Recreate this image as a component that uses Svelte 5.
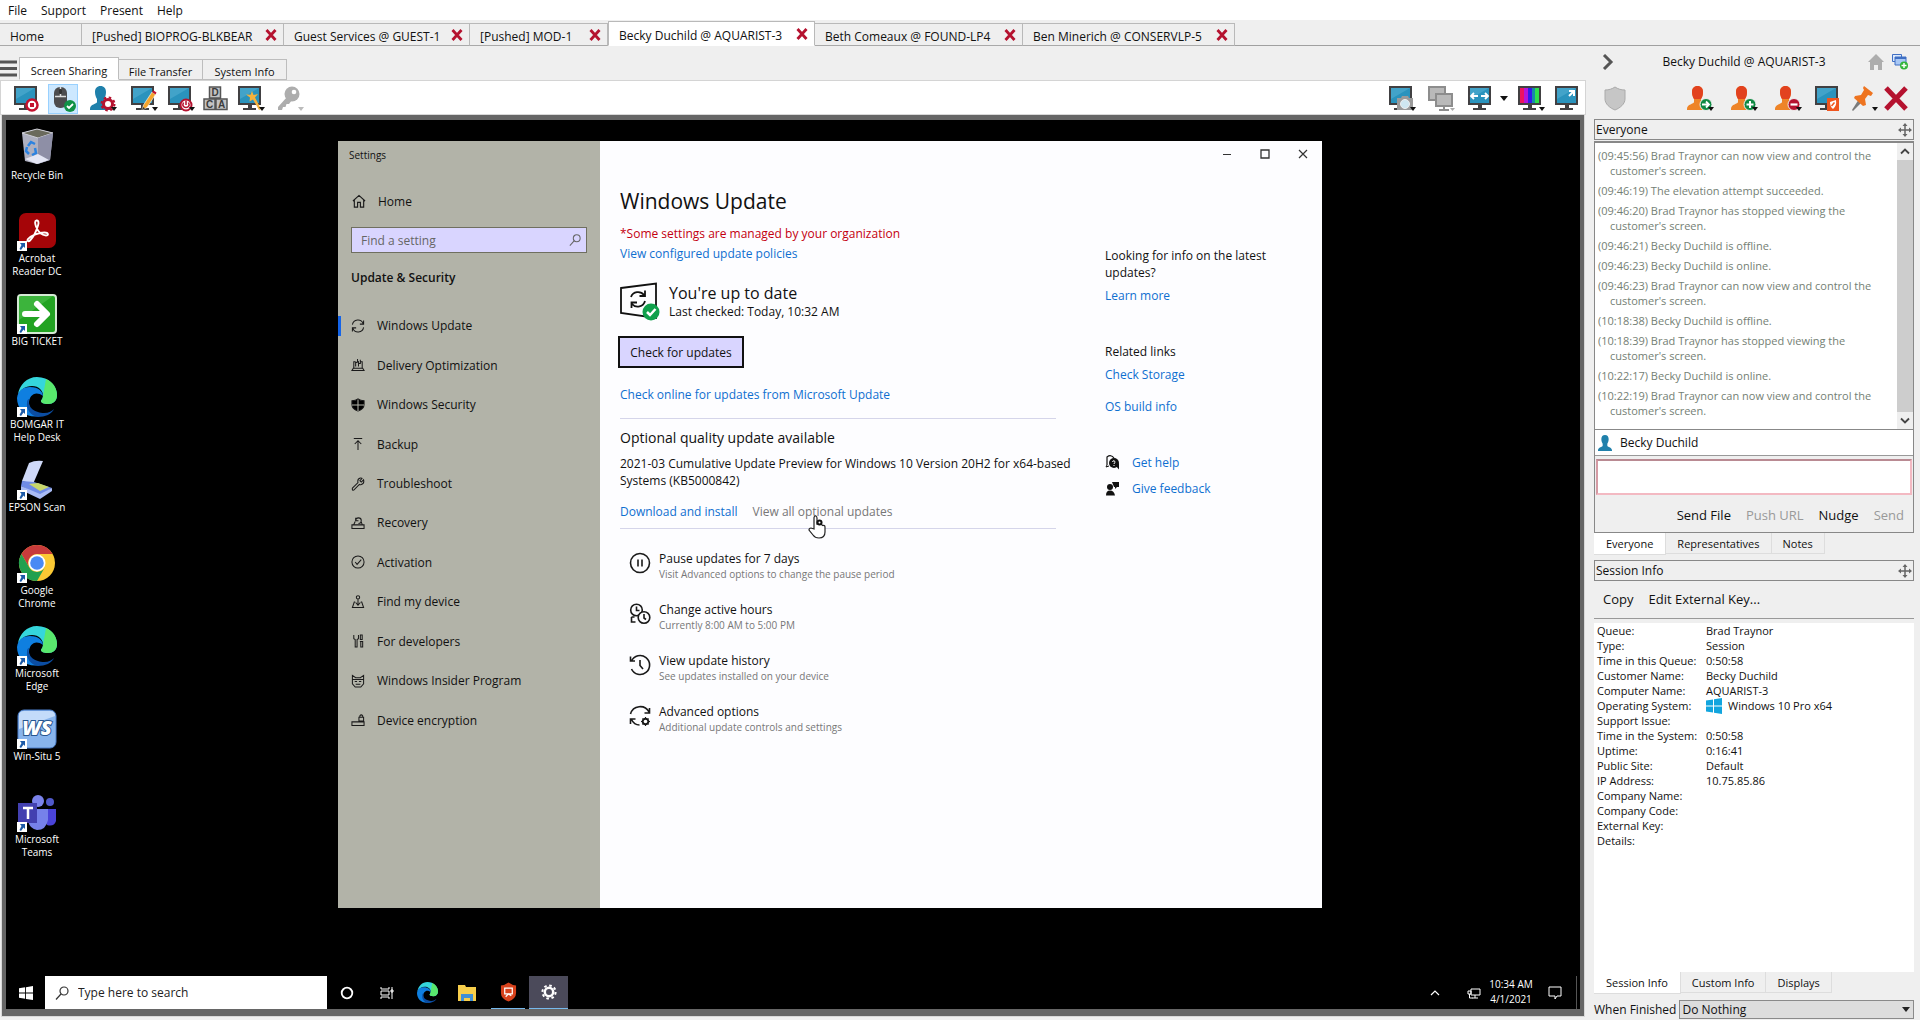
<script>
  const sessions = [
    { name: 'Home', w: 82, closable: false },
    { name: '[Pushed] BIOPROG-BLKBEAR', w: 202, closable: true },
    { name: 'Guest Services @ GUEST-1', w: 186, closable: true },
    { name: '[Pushed] MOD-1', w: 138, closable: true },
    { name: 'Becky Duchild @ AQUARIST-3', w: 207, closable: true, active: true },
    { name: 'Beth Comeaux @ FOUND-LP4', w: 208, closable: true },
    { name: 'Ben Minerich @ CONSERVLP-5', w: 212, closable: true }
  ];
  const shortcuts = [
    { icon: 'bin', label: 'Recycle Bin' },
    { icon: 'acrobat', label: 'Acrobat Reader DC', link: true },
    { icon: 'ticket', label: 'BIG TICKET', link: true },
    { icon: 'edge', label: 'BOMGAR IT Help Desk', link: true },
    { icon: 'scan', label: 'EPSON Scan', link: true },
    { icon: 'chrome', label: 'Google Chrome', link: true },
    { icon: 'edge', label: 'Microsoft Edge', link: true },
    { icon: 'ws', label: 'Win-Situ 5', link: true },
    { icon: 'teams', label: 'Microsoft Teams', link: true }
  ];
  const nav = [
    'Windows Update', 'Delivery Optimization', 'Windows Security', 'Backup', 'Troubleshoot', 'Recovery',
    'Activation', 'Find my device', 'For developers', 'Windows Insider Program', 'Device encryption'
  ];
  const options = [
    ['Pause updates for 7 days', 'Visit Advanced options to change the pause period'],
    ['Change active hours', 'Currently 8:00 AM to 5:00 PM'],
    ['View update history', 'See updates installed on your device'],
    ['Advanced options', 'Additional update controls and settings']
  ];
  const chat = [
    "(09:45:56) Brad Traynor can now view and control the customer's screen.",
    '(09:46:19) The elevation attempt succeeded.',
    "(09:46:20) Brad Traynor has stopped viewing the customer's screen.",
    '(09:46:21) Becky Duchild is offline.',
    '(09:46:23) Becky Duchild is online.',
    "(09:46:23) Brad Traynor can now view and control the customer's screen.",
    '(10:18:38) Becky Duchild is offline.',
    "(10:18:39) Brad Traynor has stopped viewing the customer's screen.",
    '(10:22:17) Becky Duchild is online.',
    "(10:22:19) Brad Traynor can now view and control the customer's screen."
  ];
  const info = [
    ['Queue:', 'Brad Traynor'], ['Type:', 'Session'], ['Time in this Queue:', '0:50:58'],
    ['Customer Name:', 'Becky Duchild'], ['Computer Name:', 'AQUARIST-3'],
    ['Operating System:', 'Windows 10 Pro x64'], ['Support Issue:', ''],
    ['Time in the System:', '0:50:58'], ['Uptime:', '0:16:41'], ['Public Site:', 'Default'],
    ['IP Address:', '10.75.85.86'], ['Company Name:', ''], ['Company Code:', ''],
    ['External Key:', ''], ['Details:', '']
  ];
  let setting = $state('');
  let query = $state('');
  let message = $state('');
</script>

{#snippet cross()}
  <svg viewBox="0 0 12 12" width="12" height="12"><path d="M1.5 1l9 10M10.500 1l-9 10" stroke="#b5122f" stroke-width="2.8" fill="none" /></svg>
{/snippet}

{#snippet screen()}
  <rect x="1" y="1" width="21" height="17" fill="#2a93bd" stroke="#414042" stroke-width="2" />
  <path d="M2 2h19L2 13z" fill="#55b0d4" opacity=".55" />
  <path d="M10 18h4v4h-4zM5 22h13v2H5z" fill="#414042" />
{/snippet}

{#snippet caret()}<path d="M21 21h6l-3 4z" fill="#111" />{/snippet}

{#snippet head()}
  <path d="M5 6c0-3.500 2-6 5.500-6S16 2.500 16 6s-1 5.500-2 7v3c0 2 7 2 7 7v1H0v-1c0-5 7-5 7-7v-3C6 11.500 5 9 5 6z" />
{/snippet}

{#snippet tool(name)}
  <svg viewBox="0 0 28 26" width="28" height="26">
    {#if name === 'stop'}
      {@render screen()}<circle cx="18" cy="19" r="5.500" fill="#fff" stroke="#c4122f" stroke-width="2.500" /><path d="M16 17h4v4h-4z" fill="#c4122f" />
    {:else if name === 'mouse'}
      <rect x="5" y="1" width="13" height="21" rx="6" fill="#4c4c4e" /><path d="M6 10.500h11M11.500 1v9" stroke="#ddd" stroke-width="1.500" /><rect x="10" y="3" width="3" height="5" rx="1" fill="#333" />
      <circle cx="21" cy="20" r="6" fill="#0f9246" /><path d="M18 20l2 2 4-4" stroke="#fff" stroke-width="1.800" fill="none" />
    {:else if name === 'usergear'}
      <g fill="#1f80ab">{@render head()}</g><circle cx="18" cy="18" r="4.500" fill="#fff" stroke="#b5122f" stroke-width="3" /><circle cx="18" cy="18" r="6.500" fill="none" stroke="#b5122f" stroke-width="2" stroke-dasharray="2.500 2.600" />{@render caret()}
    {:else if name === 'pencil'}
      {@render screen()}<path d="M11 24l1.500-5L21 6l3.500 2.500L16 21.500z" fill="#f5a52c" stroke="#fff" stroke-width=".6" /><path d="M21 6l1.500-1.500 3 2-1 2z" fill="#c4122f" /><path d="M11 24l1-3 2 1.500z" fill="#333" />{@render caret()}
    {:else if name === 'power'}
      {@render screen()}<circle cx="18" cy="19" r="5.500" fill="#fff" stroke="#b5122f" stroke-width="2" /><path d="M18 14.500v4.500M15.500 16.500c-1.500 3 0 5 2.500 5s4-2 2.500-5" stroke="#b5122f" stroke-width="1.500" fill="none" />{@render caret()}
    {:else if name === 'blocks'}
      <g fill="#c3c3c3" stroke="#555" stroke-width="1.500"><path d="M6.500 1h11v11h-11zM1 13h11v10.500H1zM13 13h11v10.500H13z" /></g>
      <g font-family="Liberation Sans" font-weight="700" font-size="10" fill="#3c3c3c" text-anchor="middle"><text x="12" y="10">D</text><text x="6.500" y="22">C</text><text x="18.500" y="22">A</text></g>
    {:else if name === 'wand'}
      {@render screen()}<path d="M14 5l1.500 4 4.500-1-3 3.500 6 11.500-2 1-6-10.500-3.500 2 .5-4L8 8.500l4.500.3z" fill="#f7b23b" />{@render caret()}
    {:else if name === 'key'}
      <circle cx="15" cy="8" r="7.500" fill="#adadad" /><circle cx="17" cy="6" r="2.300" fill="#fff" /><path d="M10 11L1 21v3h4l1-3h2.500l1-3H12l3-4z" fill="#adadad" /><path d="M21 21h6l-3 4z" fill="#bbb" />
    {:else if name === 'camera'}
      {@render screen()}<path d="M8 12h4l1-2h6l1 2h4v12H8z" fill="#9a9a9a" /><circle cx="16" cy="18" r="4.500" fill="#cfe7f1" stroke="#eee" />{@render caret()}
    {:else if name === 'multi'}
      <g stroke="#8d8d8d" stroke-width="2" fill="#b9b9b9"><path d="M1 1h16v13H1z" /><path d="M8 8h16v12H8zM16 20v4M11 24h10" /></g><path d="M22 22h5l-2.500 3z" fill="#aaa" />
    {:else if name === 'fit'}
      {@render screen()}<path d="M3 10h7M13 10h7M6 7l-3 3 3 3M17 7l3 3-3 3" stroke="#fff" stroke-width="1.800" fill="none" />
    {:else if name === 'color'}
      {@render screen()}<path d="M2 2h4v15H2z" fill="#ee125e" /><path d="M6 2h4v15H6z" fill="#b614d8" /><path d="M10 2h4v15h-4z" fill="#321be8" /><path d="M14 2h3v15h-3z" fill="#1789a8" /><path d="M17 2h4v15h-4z" fill="#2de04b" />{@render caret()}
    {:else if name === 'full'}
      {@render screen()}<path d="M14 5h5v5M19 5l-5 5" stroke="#fff" stroke-width="2" fill="none" />
    {:else if name === 'shield'}
      <path d="M11 1c3 2 6 3 10 3v9c0 5-5 9-10 11C6 22 1 18 1 13V4c4 0 7-1 10-3z" fill="#c6c6c6" stroke="#aaa" />
    {:else if name === 'share' || name === 'invite' || name === 'remove'}
      <g fill="#ee8428">{@render head()}</g><path d="M5 6c0-3.500 2-6 5.500-6S16 2.500 16 6s-1 5.500-2 7H7C6 11.500 5 9 5 6z" fill="#e2421f" />
      <circle cx="19" cy="18.500" r="6" fill={name === 'remove' ? '#b5122f' : '#0f8a43'} stroke="#efefef" />
      {#if name === 'share'}<path d="M15 18.500h7M19 15.500l3 3-3 3" stroke="#fff" stroke-width="1.800" fill="none" />{:else if name === 'invite'}<path d="M15.500 18.500h7M19 15v7" stroke="#fff" stroke-width="2" />{:else}<path d="M15.500 18.500h7" stroke="#fff" stroke-width="2.200" />{/if}
      {@render caret()}
    {:else if name === 'elevate'}
      {@render screen()}<path d="M12 12h12v13H12z" fill="#f0561f" /><path d="M15 16q3-1 6-2 1 6-3 9-3-2-3-7z" fill="#fff" /><path d="M16.500 20l3-3.500" stroke="#f0561f" stroke-width="1.500" />
    {:else if name === 'pin'}
      <path d="M1 24l7-11 3 3-9 9z" fill="#7b7b7b" /><path d="M13 0l9 7-2 3-3-1-3 4 1 6-3 1-9-8 1-2 6-1 3-5-1-2z" fill="#ee7420" />{@render caret()}
    {:else if name === 'end'}
      <path d="M2 2l20 21M22 2L2 23" stroke="#b5122f" stroke-width="5" />
    {/if}
  </svg>
{/snippet}

{#snippet edge()}
  <path d="M1 18C2 8 10 0 20 0c12 0 20 9 20 18 0 6-4 9-9 9-4 0-7-1-7-3 0-1 2-2 2-6 0-4-4-9-11-9C8 9 3 13 1 18z" fill="#35d6dc" />
  <path d="M29 2c7 3 11 9 11 16 0 6-4 9-9 9-4 0-7-1-7-3 0-1 2-2 2-5 1-6 2-11 3-17z" fill="#59e86d" />
  <path d="M0 21C1 13 7 10 13 10c9 0 13 5 13 9-8-6-14 0-14 7 0 6 5 12 11 13C10 42 0 33 0 21z" fill="#0f7fe0" />
  <path d="M12 22c-2 9 7 14 15 14 5 0 8-2 10-4-2 5-9 8-16 8-7-1-12-8-11-14 0-3 1-4 2-4z" fill="#0b4da2" />
{/snippet}

{#snippet desk(name)}
  <svg viewBox="0 0 40 40" width="40" height="40">
    {#if name === 'bin'}
      <path d="M5 5l15-4 16 4-3 27-13 4-12-3z" fill="#aeb0c0" /><path d="M5 5l15-4 16 4-15 5z" fill="#6a6a5c" stroke="#cfcfd8" /><path d="M21 10l15-5-3 27-12 4z" fill="#8e8fa6" /><path d="M8 31l13-5 11 6-12 4z" fill="#e4e6f4" />
      <path d="M11 18l3-4 4 2M18 20l1 5-4 2M12 26l-3-3 1-4" stroke="#2b82e0" stroke-width="2.500" fill="none" />
    {:else if name === 'acrobat'}
      <rect x="2" y="2" width="37" height="35" rx="7" fill="#a50508" /><path d="M19.500 9.500c2-.5 2.500 2 1.500 5-1.500 5-5 12-8 15-1.500 1.500-3.500.5-2-1.500 2.500-3 10-6.500 16.500-6.500 4 0 4.500 3 1.500 3-4-.2-8-4-10-9-1-3-1.500-5.500.5-6z" stroke="#fff" stroke-width="1.900" fill="none" />
    {:else if name === 'ticket'}
      <rect x="1" y="1" width="38" height="38" rx="3" fill="#22a322" stroke="#d5ead5" stroke-width="2" /><path d="M2 2h34L2 26z" fill="#4fc04f" opacity=".6" /><path d="M8 20h20M20 10l10 10-10 10" stroke="#fff" stroke-width="6" stroke-linecap="round" stroke-linejoin="round" fill="none" />
    {:else if name === 'edge'}
      {@render edge()}
    {:else if name === 'scan'}
      <path d="M12 3Q18 0 26 1L16 24 5 21z" fill="#cfd9f8" /><path d="M5 21l12 1 18 6-12 8L4 26z" fill="#6f8be6" /><path d="M12 24l9-1 11 4-9 4z" fill="#c7d66a" /><path d="M4 26l19 8 12-6v3l-12 8L4 30z" fill="#a9bbf5" />
    {:else if name === 'chrome'}
      <circle cx="20" cy="20" r="18" fill="#fbc934" /><path d="M4.400 11A18 18 0 0 1 35.600 11H20a9 9 0 0 0-8 13z" fill="#c83b3b" /><path d="M4.400 11A18 18 0 0 0 20 38l8-14a9 9 0 0 1-16 0z" fill="#22a04f" /><circle cx="20" cy="20" r="8.500" fill="#fff" /><circle cx="20" cy="20" r="6.800" fill="#4a8af4" />
    {:else if name === 'ws'}
      <rect x="1" y="1" width="38" height="38" rx="6" fill="#88b4ec" stroke="#4c7fca" /><path d="M2 5q1-3 5-3h26q5 0 5 5L2 20z" fill="#c3dbfa" /><text x="20" y="26" font-family="Open Sans" font-size="20" font-weight="800" font-style="italic" fill="#fff" stroke="#27568f" stroke-width="2" paint-order="stroke" text-anchor="middle">WS</text>
    {:else if name === 'teams'}
      <circle cx="21" cy="9" r="6" fill="#7b83eb" /><circle cx="33" cy="10" r="4" fill="#5059c9" /><path d="M26 17h13v12q-2 6-9 4z" fill="#4a43d8" /><path d="M12 17h19v11q-2 10-11 10-7-1-9-9z" fill="#7681ea" /><path d="M1 11h19v20H1z" fill="#4340b0" /><path d="M6 16h10M11 16v11" stroke="#fff" stroke-width="2.500" />
    {/if}
  </svg>
{/snippet}

{#snippet arc()}
  <path d="M1.500 6A6 6 0 0 1 13 5M13.500 1.500V5.500h-4M13.500 9A6 6 0 0 1 2 10M1.500 13.500v-4h4" />
{/snippet}

{#snippet side(i)}
  <svg viewBox="0 0 15 15" width="14" height="14" fill="none" stroke="#1a1a1a" stroke-width="1.100">
    {#if i === 0}{@render arc()}
    {:else if i === 1}<path d="M3 11V4h2M10 4h2v7M1 13.500h13L12.500 11h-10zM5 9V5l3-1v5M8 6h2V2M7 1v3" />
    {:else if i === 2}<path d="M7.500 1Q10 3 14 3v4q0 5-6.500 7Q1 12 1 7V3q4 0 6.500-2z" fill="#000" /><path d="M7.500 2v12M1 7.500h13" stroke="#b2b3a8" />
    {:else if i === 3}<path d="M3 1.500h9M7.500 14V4M4 7.500L7.500 4 11 7.500" />
    {:else if i === 4}<path d="M1.500 12l6-6Q6.500 2 10 1q2 0 2 .5L9.500 4 11 5.500 13.500 3Q14.500 7 11 8 10 8.500 9 8l-6 6q-2 .5-1.500-2z" />
    {:else if i === 5}<path d="M1 13.500h13V9.500H1zM3 9l1.500-3M12 9L11 6.500M5 5a3 3 0 1 1 3 3M5 2v3h3" />
    {:else if i === 6}<circle cx="7.500" cy="7.500" r="6.500" /><path d="M4.500 7.500l2 2.500 4.500-5" />
    {:else if i === 7}<circle cx="7.500" cy="2.500" r="1.800" /><path d="M7.500 4.500V11M4.500 7.500h-1L1.500 13.500h12L11.500 7.500h-1M5 8l2.500 3L10 8" />
    {:else if i === 8}<path d="M3 1v4l1.500 1v8h2V6L8 5V1M10 1h2v5h-2zM9.500 8h3v6h-2V8" />
    {:else if i === 9}<path d="M1.500 1.500L5 4h5l3.500-2.500v9L10.500 14h-6L1.500 10.500zM1.500 6h12M4 8h2.500M8.500 8H11M5 11h5" />
    {:else}<path d="M1 9.500h13v4H1zM8.500 4.500h5v4h-5zM9.500 4.500V3q1.500-2 3 0v1.500" />{/if}
  </svg>
{/snippet}

{#snippet opt(i)}
  <svg viewBox="0 0 22 22" width="22" height="22" fill="none" stroke="#1a1a1a" stroke-width="1.600">
    {#if i === 0}<circle cx="11" cy="11" r="9.500" /><path d="M9 7.500v7M13 7.500v7" />
    {:else if i === 1}<circle cx="7.500" cy="7" r="5.800" /><path d="M7.500 3.500V7.500h3" /><circle cx="15" cy="14.500" r="5.800" fill="#fdfdff" /><path d="M15 11v4l2 1.500M2.500 14v5h4M2.500 14h3" />
    {:else if i === 2}<path d="M2.500 7a9.500 9.500 0 1 1 0 8M1.500 2.500V7H6M11 6v5.500l3 3.500" />
    {:else}<path d="M1.500 9A10 10 0 0 1 20 7M20.500 3v5h-5M1.500 19v-5h5M2.500 14.500Q5 20 10.500 20" /><circle cx="16.500" cy="16.500" r="2.800" stroke-width="2" /><path d="M16.500 12v9M12 16.500h9M13.500 13.500l6 6M19.500 13.500l-6 6" stroke-width="1" /><circle cx="16.500" cy="16.500" r="1.800" fill="#fff" stroke="none" />{/if}
  </svg>
{/snippet}

{#snippet winlogo(size, color)}
  <svg viewBox="0 0 16 16" width={size} height={size} fill={color}><path d="M0 2.500L7 1.500v6H0zM8 1.300L16 0v7.500H8zM0 8.500h7v6l-7-1zM8 8.500h8V16l-8-1.200z" /></svg>
{/snippet}

{#snippet loupe(color, size)}
  <svg viewBox="0 0 14 14" width={size} height={size} fill="none" stroke={color} stroke-width="1.200"><circle cx="9" cy="5" r="4" /><path d="M6 8l-5 5.500" /></svg>
{/snippet}

{#snippet move()}
  <svg viewBox="0 0 14 14" width="14" height="14"><path d="M7 1v12M1 7h12" stroke="#666" stroke-width="1.500" /><path d="M7 0l2.500 3h-5zM7 14l2.500-3h-5zM0 7l3-2.500v5zM14 7l-3-2.500v5z" fill="#666" /></svg>
{/snippet}

<div class="app">
  <nav class="menubar"><button>File</button><button>Support</button><button>Present</button><button>Help</button></nav>

  <div class="sessions">
    {#each sessions as s}
      <div class="session" class:active={s.active} style:width="{s.w}px">
        <button>{s.name}</button>
        {#if s.closable}<button class="close" aria-label="Close {s.name}">{@render cross()}</button>{/if}
      </div>
    {/each}
    <div class="rest"></div>
  </div>

  <div class="body">
    <section class="viewer">
      <div class="subtabs">
        <button class="burger" aria-label="Menu"><svg viewBox="0 0 17 17" width="17" height="17"><path d="M0 2h17M0 8.500h17M0 15h17" stroke="#555" stroke-width="3" /></svg></button>
        <button class="subtab on">Screen Sharing</button>
        <button class="subtab">File Transfer</button>
        <button class="subtab">System Info</button>
      </div>
      <div class="toolbar">
        {#each ['stop', 'mouse', 'usergear', 'pencil', 'power', 'blocks', 'wand', 'key'] as t}
          <button class="tool {t}" aria-label={t}>{@render tool(t)}</button>
        {/each}
        <span class="grow"></span>
        {#each ['camera', 'multi', 'fit', 'color', 'full'] as t}
          <button class="tool {t}" aria-label={t}>{@render tool(t)}{#if t === 'fit'}<svg viewBox="0 0 8 5" width="8" height="5"><path d="M0 0h8L4 5z" fill="#111" /></svg>{/if}</button>
        {/each}
      </div>

      <div class="frame">
        <div class="desktop">
          <div class="shortcuts">
            {#each shortcuts as s}
              <button class="shortcut">
                <span class="pic">{@render desk(s.icon)}{#if s.link}<svg class="arrow" viewBox="0 0 10 10" width="10" height="10"><path d="M0 0h10v10H0z" fill="#fff" /><path d="M3 2h5v5L6.500 5.500 4 9 2.500 8 4.500 4z" fill="#1c5aa8" /></svg>{/if}</span>
                <span class="cap">{s.label}</span>
              </button>
            {/each}
          </div>

          <div class="window">
            <aside>
              <div class="wtitle">Settings</div>
              <button class="navitem home"><svg viewBox="0 0 15 15" width="14" height="14" fill="none" stroke="#1a1a1a" stroke-width="1.200"><path d="M1 7.500L7.500 1.500 14 7.500M2.500 6.500V14H6V9h3v5h3.500V6.500" /></svg>Home</button>
              <label class="find"><input bind:value={setting} placeholder="Find a setting" aria-label="Find a setting" />{@render loupe('#666', 12)}</label>
              <h2>Update &amp; Security</h2>
              <div class="navlist">
                {#each nav as n, i}
                  <button class="navitem" class:current={i === 0}>{@render side(i)}{n}</button>
                {/each}
              </div>
            </aside>
            <div class="content">
              <div class="winctl">
                <button aria-label="Minimize"><svg viewBox="0 0 10 10" width="10" height="10"><path d="M1 5.500h8" stroke="#333" /></svg></button>
                <button aria-label="Maximize"><svg viewBox="0 0 10 10" width="10" height="10"><path d="M1 1h8v8H1z" stroke="#333" stroke-width="1.300" fill="none" /></svg></button>
                <button aria-label="Close"><svg viewBox="0 0 10 10" width="10" height="10"><path d="M1 1l8 8M9 1L1 9" stroke="#333" stroke-width="1.200" /></svg></button>
              </div>
              <div class="cols">
                <main>
                  <h1>Windows Update</h1>
                  <p class="warn">*Some settings are managed by your organization</p>
                  <a href="#policies">View configured update policies</a>
                  <div class="status">
                    <svg viewBox="0 0 40 40" width="40" height="40" fill="none" stroke="#111" stroke-width="1.800"><path d="M1 6L36 1.500V36L1 31z" /><path d="M11 15a7.500 7.500 0 0 1 13-2M25 8.500V14h-5.500M25 19a7.500 7.500 0 0 1-13 3M11.500 26v-5.500H17" /><circle cx="31" cy="30" r="8.500" fill="#10a04c" stroke="none" /><path d="M27 30l3 3 5.500-6" stroke="#fff" stroke-width="2.500" /></svg>
                    <div><div class="big">You're up to date</div><div>Last checked: Today, 10:32 AM</div></div>
                  </div>
                  <button class="check">Check for updates</button>
                  <a class="online" href="#online">Check online for updates from Microsoft Update</a>
                  <section class="optional">
                    <h3>Optional quality update available</h3>
                    <p class="desc">2021-03 Cumulative Update Preview for Windows 10 Version 20H2 for x64-based Systems (KB5000842)</p>
                    <div class="links"><a href="#install">Download and install</a><a class="muted" href="#optional">View all optional updates</a>
                      <svg class="hand" viewBox="0 0 18 24" width="18" height="24"><path d="M6 14V3q0-2 1.500-2T9 3v6q2-1 3 .5 2-.5 2.500 1Q17 10 17 12v5q0 6-6 6-4 0-6-3l-4-5q0-2 2-2z" fill="#fff" stroke="#222" stroke-width="1.200" /><circle cx="11.500" cy="7.500" r="3" fill="#111" /><circle cx="11.500" cy="7.500" r="1" fill="#fff" /></svg>
                    </div>
                  </section>
                  <div class="options">
                    {#each options as [t, d], i}
                      <button>{@render opt(i)}<span><b>{t}</b><small>{d}</small></span></button>
                    {/each}
                  </div>
                </main>
                <div class="related">
                  <p>Looking for info on the latest updates?</p>
                  <a class="learn" href="#learn">Learn more</a>
                  <p class="rl">Related links</p>
                  <a class="store" href="#storage">Check Storage</a>
                  <a class="build" href="#build">OS build info</a>
                  <a class="help" href="#help"><svg viewBox="0 0 15 15" width="15" height="15"><path d="M2 10V2q4-3 7 1" stroke="#111" fill="none" stroke-width="1.200" /><path d="M2 10l-1 2 3-1" fill="none" stroke="#111" /><circle cx="9" cy="8" r="5" fill="#111" /><path d="M11 11l3 3.500V8z" fill="#111" /><path d="M7.500 7q.5-1.500 1.500-1.300T10 7.500q-1 .5-1 1.500M9 10v1" stroke="#fff" fill="none" /></svg>Get help</a>
                  <a class="fb" href="#feedback"><svg viewBox="0 0 15 15" width="15" height="15" fill="#111"><circle cx="5" cy="6" r="3" /><path d="M1 14.500q0-5 4-5t5 5zM7 1h7v5h-2l-2 2V6H9z" /></svg>Give feedback</a>
                </div>
              </div>
            </div>
          </div>

          <div class="taskbar">
            <button class="start" aria-label="Start">{@render winlogo(14, '#fff')}</button>
            <label class="search">{@render loupe('#333', 14)}<input bind:value={query} placeholder="Type here to search" aria-label="Type here to search" /></label>
            <button aria-label="Cortana"><svg viewBox="0 0 14 14" width="14" height="14"><circle cx="7" cy="7" r="5.300" fill="none" stroke="#fff" stroke-width="1.800" /></svg></button>
            <button aria-label="Task View"><svg viewBox="0 0 14 14" width="14" height="14" fill="none" stroke="#fff"><path d="M1 1v2h8V1M1 5h8v4H1zM1 13v-2h8v2M12 1v12M11 4h2v2h-2z" /></svg></button>
            <button aria-label="Microsoft Edge"><svg viewBox="0 0 40 40" width="21" height="21">{@render edge()}</svg></button>
            <button aria-label="File Explorer"><svg viewBox="0 0 18 16" width="18" height="16"><path d="M0 0h7l1 2h10v14H0z" fill="#f7ce4b" /><path d="M3 16V9h12v7h-3v-3H6v3z" fill="#3f8fd6" /></svg></button>
            <button class="run" aria-label="Remote support"><svg viewBox="0 0 18 20" width="17" height="20"><path d="M9 0q4 3 8 3v8q0 6-8 9-8-3-8-9V3q4 0 8-3z" fill="#d8421c" /><path d="M5 6h8v6H5zM6 15l3-3 3 2" fill="none" stroke="#fff" stroke-width="1.300" /></svg></button>
            <button class="run sel" aria-label="Settings"><svg viewBox="0 0 16 16" width="16" height="16" fill="none" stroke="#fff"><circle cx="8" cy="8" r="4.200" stroke-width="2.500" /><circle cx="8" cy="8" r="6.600" stroke-width="2" stroke-dasharray="2.600 2.580" /></svg></button>
            <span class="grow"></span>
            <button class="up" aria-label="Hidden icons"><svg viewBox="0 0 10 10" width="10" height="10"><path d="M1 7l4-4 4 4" stroke="#fff" fill="none" stroke-width="1.200" /></svg></button>
            <button class="net" aria-label="Network"><svg viewBox="0 0 14 12" width="14" height="12" fill="none" stroke="#fff"><path d="M4 2h9v6H4zM8 8v3M5 11h6M1 4h3v3H1zM2.500 7v4h3" /></svg></button>
            <div class="clock"><div>10:34 AM</div><div>4/1/2021</div></div>
            <button class="note" aria-label="Notifications"><svg viewBox="0 0 14 14" width="14" height="14" fill="none" stroke="#fff"><path d="M1 1h12v9H9l-2 3v-3H1z" /></svg></button>
            <span class="peek"></span>
          </div>
        </div>
      </div>
    </section>

    <aside class="panel">
      <div class="ptitle">
        <button aria-label="Collapse"><svg viewBox="0 0 12 16" width="12" height="16"><path d="M2 1l7 7-7 7" stroke="#555" stroke-width="3" fill="none" /></svg></button>
        <span>Becky Duchild @ AQUARIST-3</span>
        <button aria-label="Home"><svg viewBox="0 0 16 16" width="16" height="16"><path d="M8 0l8 8h-2v8h-4v-5H6v5H2V8H0z" fill="#adadad" /></svg></button>
        <button aria-label="New session"><svg viewBox="0 0 16 16" width="16" height="16"><path d="M.5.500h9v7h-9z" fill="#dce9fb" stroke="#3f6fc4" /><path d="M3 3h11v8H3z" fill="#a9c8f5" stroke="#3f6fc4" /><path d="M3 3h11v2H3z" fill="#3f6fc4" /><circle cx="12" cy="11.500" r="4" fill="#31b53a" /><path d="M9.500 11.500h5M12 9v5" stroke="#fff" stroke-width="1.400" /></svg></button>
      </div>
      <div class="ptools">
        <button class="tool" aria-label="Elevation">{@render tool('shield')}</button>
        <span class="grow"></span>
        {#each ['share', 'invite', 'remove', 'elevate', 'pin', 'end'] as t}
          <button class="tool {t}" aria-label={t}>{@render tool(t)}</button>
        {/each}
      </div>
      <div class="phead"><span>Everyone</span>{@render move()}</div>
      <div class="chatbox">
        <div class="chat">
          <div class="lines">{#each chat as c}<p>{c}</p>{/each}</div>
          <div class="sbar">
            <svg viewBox="0 0 10 10" width="10" height="17"><path d="M1 7l4-4 4 4" stroke="#444" stroke-width="1.800" fill="none" /></svg>
            <i></i>
            <svg viewBox="0 0 10 10" width="10" height="17"><path d="M1 3l4 4 4-4" stroke="#444" stroke-width="1.800" fill="none" /></svg>
          </div>
        </div>
        <div class="who"><svg viewBox="0 0 21 24" width="16" height="16" fill="#1f80ab">{@render head()}</svg>Becky Duchild</div>
        <textarea bind:value={message} aria-label="Message"></textarea>
        <div class="acts"><button>Send File</button><button disabled>Push URL</button><button>Nudge</button><button disabled>Send</button></div>
      </div>
      <div class="ptabs"><button class="on">Everyone</button><button>Representatives</button><button>Notes</button></div>
      <div class="phead second"><span>Session Info</span>{@render move()}</div>
      <div class="edit"><button>Copy</button><button>Edit External Key...</button></div>
      <div class="info">
        <table>
          <tbody>
            {#each info as [k, v]}
              <tr><th scope="row">{k}</th><td><span>{#if k === 'Operating System:'}{@render winlogo(16, '#12a5de')}{/if}{v}</span></td></tr>
            {/each}
          </tbody>
        </table>
      </div>
      <div class="ptabs"><button class="on">Session Info</button><button>Custom Info</button><button>Displays</button></div>
      <div class="finish"><label for="fin">When Finished</label><span class="pick"><select id="fin"><option>Do Nothing</option></select><svg viewBox="0 0 8 5" width="8" height="5"><path d="M0 0h8L4 5z" fill="#222" /></svg></span></div>
    </aside>
  </div>
</div>

<style>
  :global(body) { margin: 0; }
  * { box-sizing: border-box; }
  .app { min-height: 100vh; display: flex; flex-direction: column; background: #efefef; color: #111; font: 12px/15px "Open Sans", "Noto Sans", sans-serif; }
  button, input, textarea, select { font: inherit; color: inherit; }
  button { background: none; border: 0; padding: 0; text-align: left; white-space: nowrap; }
  svg { display: block; flex: none; }
  p, h1, h2, h3 { margin: 0; font-weight: 400; }
  .grow { flex: 1; }
  .menubar { background: #fff; height: 20px; display: flex; gap: 14px; padding: 1px 8px 0; }
  .sessions { display: flex; align-items: flex-end; height: 26px; }
  .session { display: flex; align-items: center; justify-content: space-between; height: 23px; padding: 4px 6px 0 10px; border: 1px solid #b9b9b9; border-left-width: 0; border-bottom-color: #a9a9a9; }
  .session.active { height: 25px; background: #fff; border-bottom-color: #fff; border-left-width: 1px; }
  .close { margin-bottom: 4px; }
  .rest { flex: 1; height: 1px; background: #a0a0a0; }
  .body { flex: 1; display: flex; }
  .viewer { flex: 1; min-width: 0; display: flex; flex-direction: column; }
  .subtabs { height: 34px; display: flex; align-items: flex-end; padding-top: 11px; font-size: 11px; }
  .burger { width: 19px; padding-bottom: 3px; }
  .subtab { width: 84px; height: 21px; padding: 3px 0 0; text-align: center; border: 1px solid #bdbdbd; border-left-width: 0; }
  .subtab.on { width: 100px; height: 23px; background: #fff; border-bottom-color: #fff; border-left-width: 1px; }
  .toolbar { height: 35px; display: flex; align-items: center; gap: 7px; padding: 1px 1px 0 12px; background: #fff; border: 1px solid #d4d4d4; border-bottom: 0; }
  .tool { display: flex; align-items: center; justify-content: center; width: 30px; height: 30px; }
  .tool.mouse { background: #cde8ff; border: 1px solid #99d1ff; margin-left: -2px; }
  .tool.usergear, .tool.pencil { margin-left: 4px; }
  .tool.blocks, .tool.wand { margin-left: -2px; }
  .tool.key { margin-left: 2px; }
  .tool.camera, .tool.multi { margin-right: 2px; }
  .tool.fit { width: 44px; gap: 4px; }
  .frame { flex: 1; display: flex; margin: 0 2px 4px; border: solid #666; border-width: 5px 4px 7px; background: #000; outline: 1px solid #d8d8d8; }
  .desktop { flex: 1; position: relative; display: flex; flex-direction: column; color: #fff; }
  .shortcuts { flex: 1; padding: 8px 0 0 1px; }
  .shortcut { display: flex; flex-direction: column; align-items: center; width: 60px; height: 83px; }
  .pic { position: relative; }
  .arrow { position: absolute; left: 0; bottom: 0; }
  .cap { font-size: 10px; line-height: 13px; text-align: center; white-space: normal; width: 58px; margin: 1px 0; }
  .window { position: absolute; left: 332px; top: 21px; width: 984px; height: 767px; display: flex; background: #fdfdff; color: #111; font-size: 12px; line-height: 17px; }
  .window aside { width: 262px; background: #b2b3a8; }
  .wtitle { font-size: 10px; line-height: 14px; padding: 7px 11px 0; height: 40px; }
  .navitem { display: flex; align-items: center; gap: 12px; width: 100%; padding: 0 13px; }
  .navitem.home { height: 40px; padding-left: 14px; }
  .find { display: flex; align-items: center; margin: 6px 13px 0; height: 26px; border: 1px solid #6f6f60; background: #d9d5ff; padding: 0 5px 0 9px; }
  .find input { flex: 1; min-width: 0; border: 0; background: none; padding: 0; outline: 0; }
  .find input::placeholder { color: #666; }
  h2 { font-size: 12px; line-height: 17px; font-weight: 600; padding: 16px 13px 20px; }
  .navlist { display: grid; grid-auto-rows: 1fr; height: 434px; }
  .current { background: linear-gradient(#1464e8, #1464e8) 0 50% / 3px 20px no-repeat; }
  .content { flex: 1; min-width: 0; }
  .winctl { display: flex; justify-content: flex-end; gap: 28px; padding: 8px 14px 0; height: 40px; align-items: flex-start; }
  .cols { display: flex; }
  main { width: 456px; padding: 4px 0 0 20px; display: flex; flex-direction: column; align-items: flex-start; }
  h1 { font-size: 21px; line-height: 32px; margin-bottom: 8px; }
  .warn { color: #c4000f; margin-bottom: 3px; }
  a { color: #0f6fd0; text-decoration: none; }
  .status { display: flex; gap: 9px; margin-top: 20px; }
  .status > div { padding-top: 1px; }
  .big { font-size: 16px; line-height: 20px; }
  .check { margin: 14px 0 0 -2px; width: 126px; height: 32px; text-align: center; border: 2px solid #111; background: #d9d5ff; }
  .online { margin: 18px 0 15px; }
  .optional { border: solid #d5d5ea; border-width: 1px 0; width: 100%; }
  h3 { font-size: 14px; line-height: 20px; margin: 9px 0 7px; }
  .desc { margin-right: -28px; }
  .links { position: relative; display: flex; gap: 15px; margin: 14px 0 8px; }
  .muted { color: #777; }
  .hand { position: absolute; left: 188px; top: 12px; }
  .options { display: grid; margin-top: 21px; padding-left: 9px; }
  .options button { display: flex; gap: 8px; height: 51px; }
  .options svg { margin-top: 2px; }
  .options b { display: block; font-weight: 400; }
  .options small { display: block; font-size: 10px; line-height: 15px; color: #777; }
  .related { width: 180px; margin-left: 49px; padding-top: 66px; display: flex; flex-direction: column; align-items: flex-start; }
  .learn { margin: 6px 0 39px; }
  .store { margin: 6px 0 15px; }
  .build { margin-bottom: 39px; }
  .help, .fb { display: flex; gap: 12px; align-items: center; margin-bottom: 9px; }
  .taskbar { display: flex; height: 33px; align-items: stretch; }
  .taskbar button { display: flex; align-items: center; justify-content: center; width: 40px; }
  .taskbar .start { width: 39px; }
  .search { display: flex; align-items: center; gap: 9px; width: 282px; background: #fff; color: #222; padding: 0 10px; }
  .search input { flex: 1; border: 0; padding: 0; outline: 0; background: none; min-width: 0; }
  .search input::placeholder { color: #222; }
  .taskbar .run { width: 34px; margin: 0 4px; border-bottom: 1px solid #76b9ed; }
  .taskbar .run.sel { background: #4b4a5a; width: 39px; margin: 0; }
  .taskbar .up { width: 50px; }
  .taskbar .net { width: 28px; }
  .clock { font-size: 10px; line-height: 15px; width: 46px; text-align: center; padding-top: 1px; white-space: nowrap; }
  .taskbar .note { width: 42px; }
  .peek { width: 4px; border-left: 1px solid #555; }
  .panel { width: 334px; padding: 0 6px 0 8px; display: flex; flex-direction: column; }
  .ptitle { display: flex; align-items: center; gap: 8px; height: 34px; padding: 0 6px 3px 8px; }
  .ptitle span { flex: 1; text-align: center; padding-left: 6px; }
  .ptools { display: flex; height: 39px; align-items: center; gap: 14px; padding: 0 6px 2px 9px; }
  .ptools .elevate { margin-left: -4px; }
  .ptools .pin { margin-left: -8px; }
  .ptools .end { margin-left: -10px; width: 24px; justify-content: flex-start; }
  .phead { display: flex; align-items: center; justify-content: space-between; height: 21px; border: 1px solid #888; padding: 0 1px; }
  .chatbox { border: 1px solid #888; margin-top: 1px; height: 392px; display: flex; flex-direction: column; }
  .chat { display: flex; height: 291px; border-bottom: 1px solid #888; border-top: 1px solid #888; background: #fff; color: #748074; font-size: 11px; }
  .lines { flex: 1; padding: 5px 8px 0 3px; }
  .lines p { margin-bottom: 5px; padding-left: 12px; text-indent: -12px; }
  .sbar { width: 16px; background: #efefef; display: flex; flex-direction: column; align-items: center; }
  .sbar i { flex: 1; width: 16px; background: #cdcdcd; }
  .who { display: flex; align-items: center; gap: 7px; height: 26px; padding-left: 2px; background: #fff; border-bottom: 1px solid #999; }
  textarea { height: 36px; margin: 3px 1px 0; resize: none; border: 2px solid #f3b9c2; border-top-color: #b98a92; border-left-color: #d59aa4; background: #fff; }
  .acts, .edit { display: flex; font-size: 13px; line-height: 18px; }
  .acts { justify-content: flex-end; gap: 15px; padding: 11px 9px 8px; }
  .acts button:disabled { color: #999; }
  .ptabs { display: flex; font-size: 11px; }
  .ptabs button { height: 21px; padding: 0 11px; border-right: 1px solid #ddd; border-bottom: 1px solid #ddd; }
  .ptabs .on { background: #fff; height: 22px; padding: 0 12px; }
  .second { margin-top: 5px; }
  .edit { gap: 15px; padding: 9px 9px 10px; border-bottom: 1px solid #999; }
  .info { flex: 1; background: #fff; margin-top: 4px; font-size: 11px; }
  table { border-collapse: collapse; }
  th, td { padding: 0; font-weight: 400; text-align: left; height: 15px; }
  th { width: 112px; padding-left: 3px; white-space: nowrap; }
  td span { display: flex; gap: 6px; height: 15px; }
  .finish { display: flex; align-items: center; height: 26px; padding-top: 4px; gap: 3px; }
  .pick { flex: 1; display: grid; align-items: center; }
  .pick > * { grid-area: 1 / 1; }
  .pick svg { justify-self: end; margin-right: 4px; }
  .pick select { appearance: none; height: 19px; border: 1px solid #8a8a8a; border-radius: 0; background: #ddd; padding: 0 2px; }
</style>
